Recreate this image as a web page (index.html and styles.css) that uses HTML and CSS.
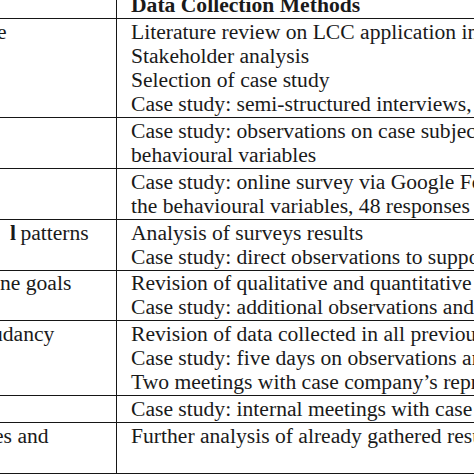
FILE: index.html
```html
<!DOCTYPE html>
<html lang="en">
<head>
    <meta charset="UTF-8">
    <title>Data Collection Methods</title>
    <link rel="stylesheet" href="styles.css">
</head>
<body>
    <div class="crop">
        <table class="methods">
            <thead>
                <tr>
                    <th class="stage"></th>
                    <th class="methods-col">Data Collection Methods</th>
                </tr>
            </thead>
            <tbody>
                <tr>
                    <td class="stage"><span class="cut-3">e</span></td>
                    <td>
                        <div>Literature review on LCC application in industry</div>
                        <div>Stakeholder analysis</div>
                        <div>Selection of case study</div>
                        <div>Case study: semi-structured interviews, meetings</div>
                    </td>
                </tr>
                <tr>
                    <td class="stage"></td>
                    <td>
                        <div>Case study: observations on case subject</div>
                        <div>behavioural variables</div>
                    </td>
                </tr>
                <tr>
                    <td class="stage"></td>
                    <td>
                        <div>Case study: online survey via Google Forms</div>
                        <div>the behavioural variables, 48 responses collected</div>
                    </td>
                </tr>
                <tr>
                    <td class="stage"><span class="gap"><b>l</b> patterns</span></td>
                    <td>
                        <div>Analysis of surveys results</div>
                        <div>Case study: direct observations to support</div>
                    </td>
                </tr>
                <tr>
                    <td class="stage">ne goals</td>
                    <td>
                        <div>Revision of qualitative and quantitative data</div>
                        <div>Case study: additional observations and</div>
                    </td>
                </tr>
                <tr>
                    <td class="stage"><span class="cut-8">udancy</span></td>
                    <td>
                        <div>Revision of data collected in all previous</div>
                        <div>Case study: five days on observations and</div>
                        <div>Two meetings with case company’s representatives</div>
                    </td>
                </tr>
                <tr>
                    <td class="stage"></td>
                    <td>
                        <div>Case study: internal meetings with case company</div>
                    </td>
                </tr>
                <tr>
                    <td class="stage"><span class="cut-6">es and</span></td>
                    <td>
                        <div>Further analysis of already gathered results</div>
                        <div>&nbsp;</div>
                    </td>
                </tr>
            </tbody>
        </table>
    </div>
</body>
</html>
```

FILE: styles.css
```css
/* Page */
body {
    margin: 0;
    background: #fff;
    color: #1a1a1a;
    font-family: "Liberation Serif", "Times New Roman", serif;
    font-size: 21.6px;
    overflow: hidden;
}

.crop {
    width: 474px;
    height: 474px;
    overflow: hidden;
}

/* Table */
.methods {
    border-collapse: collapse;
    margin-top: -7.5px;
    white-space: nowrap;
    line-height: 24.1px;
}

.methods th,
.methods td {
    padding: 0.8px 0;
    vertical-align: top;
    text-align: left;
    border-bottom: 1.3px solid #161616;
}

.methods th {
    font-weight: bold;
}

.methods .stage {
    width: 116px;
    min-width: 116px;
    max-width: 116px;
    overflow: hidden;
    border-right: 1.5px solid #161616;
}

.methods td:not(.stage),
.methods .methods-col {
    padding-left: 14px;
}

/* first column is cropped at the left edge */
.cut-3,
.cut-6,
.cut-8 {
    display: inline-block;
}

.cut-3 {
    margin-left: -3px;
}

.cut-6 {
    margin-left: -6px;
}

.cut-8 {
    margin-left: -8px;
}

.gap {
    padding-left: 10px;
    word-spacing: -1px;
}
```
